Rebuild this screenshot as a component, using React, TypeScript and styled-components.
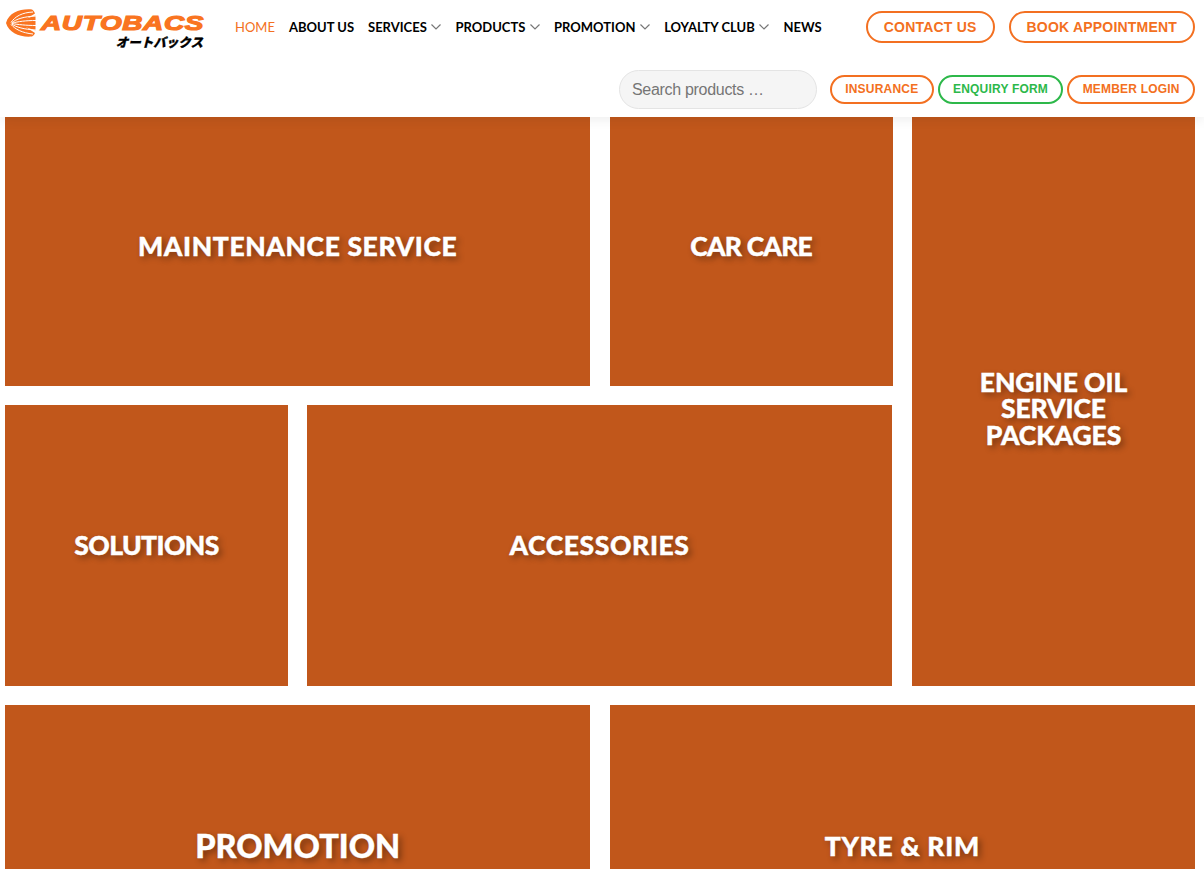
import React from "react"
import styled, { createGlobalStyle } from "styled-components"

const orange = "#f37021"
const green = "#2db84a"

const GlobalStyle = createGlobalStyle`
  html, body {
    margin: 0;
    padding: 0;
    background: #fff;
    overflow: hidden;
  }
  * {
    box-sizing: border-box;
  }
`

const Page = styled.div`
  height: 869px;
  overflow: hidden;
  font-family: "Lato", sans-serif;
`

const Header = styled.header`
  position: relative;
  z-index: 2;
  height: 117px;
  padding: 0 9px 0 5px;
  background: #fff;
  box-shadow: 0 2px 12px rgba(0, 0, 0, 0.08);
`

const TopRow = styled.div`
  display: flex;
  align-items: flex-start;
  height: 70px;
`

const Logo = styled.a`
  display: block;
  flex: none;
  width: 200px;
  height: 46px;
  margin-top: 8px;
`

const LogoTop = styled.div`
  display: flex;
  align-items: center;
  height: 30px;
`

const LogoWord = styled.span`
  margin-left: 5px;
  font-family: "Liberation Sans", sans-serif;
  font-size: 21px;
  font-weight: 700;
  font-style: italic;
  letter-spacing: 0.5px;
  line-height: 30px;
  color: #f97420;
  -webkit-text-stroke: 1.2px #f97420;
  transform-origin: left center;
  transform: scaleX(1.33);
`

const LogoKana = styled.div`
  margin-top: -3px;
  padding-right: 2px;
  text-align: right;
  font-family: "Noto Sans CJK JP", sans-serif;
  font-size: 12.5px;
  font-weight: 900;
  font-style: italic;
  line-height: 14px;
  color: #000;
  -webkit-text-stroke: 0.3px #000;
`

const Nav = styled.nav`
  display: flex;
  align-items: center;
  gap: 14px;
  height: 20px;
  margin: 17px 0 0 30px;
`

const NavItem = styled.a<{ $active?: boolean }>`
  display: flex;
  align-items: center;
  gap: 4.7px;
  font-size: 13px;
  font-weight: ${(p) => (p.$active ? 400 : 700)};
  line-height: 20px;
  white-space: nowrap;
  color: ${(p) => (p.$active ? orange : "#000")};
`

const Actions = styled.div`
  display: flex;
  gap: 14px;
  margin: 11px 0 0 auto;
`

const PillButton = styled.a<{ $small?: boolean; $green?: boolean }>`
  display: flex;
  align-items: center;
  justify-content: center;
  height: ${(p) => (p.$small ? 29 : 32)}px;
  padding: 0 ${(p) => (p.$small ? 13.3 : 16)}px 1px;
  border: 2px solid ${(p) => (p.$green ? green : orange)};
  border-radius: 20px;
  font-family: "Liberation Sans", sans-serif;
  font-size: ${(p) => (p.$small ? 12 : 14)}px;
  font-weight: 700;
  letter-spacing: 0.2px;
  white-space: nowrap;
  color: ${(p) => (p.$green ? green : orange)};
`

const BottomRow = styled.div`
  display: flex;
  align-items: center;
  justify-content: flex-end;
`

const Search = styled.input`
  width: 198px;
  height: 39px;
  margin-right: 13px;
  padding: 0 12px;
  border: 1px solid #e4e4e4;
  border-radius: 20px;
  background: #f5f5f5;
  font-family: "Liberation Sans", sans-serif;
  font-size: 16px;
  letter-spacing: -0.3px;
  outline: none;

  &::placeholder {
    color: #757575;
    opacity: 1;
  }
`

const SmallButtons = styled.div`
  display: flex;
  gap: 4px;
`

const Tiles = styled.main`
  display: grid;
  grid-template-columns: repeat(4, 283px);
  grid-template-rows: 269px 281px 282px;
  column-gap: 19.33px;
  row-gap: 19px;
  padding-left: 5px;
`

const Tile = styled.a<{ $col: number; $row?: number; $size?: number; $track?: number; $shift?: number }>`
  display: flex;
  align-items: center;
  justify-content: center;
  grid-column: span ${(p) => p.$col};
  grid-row: span ${(p) => p.$row ?? 1};
  padding-top: ${(p) => Math.max(p.$shift ?? 0, 0) * 2}px;
  padding-bottom: ${(p) => Math.max(-(p.$shift ?? 0), 0) * 2}px;
  background: #c1571b;
  text-align: center;
  font-family: "Lato", sans-serif;
  font-size: ${(p) => p.$size ?? 26.5}px;
  font-weight: 900;
  letter-spacing: ${(p) => p.$track ?? 0}px;
  line-height: 26.5px;
  color: #fff;
  -webkit-text-stroke: 0.4px #fff;
  text-shadow: 3px 3px 6px rgba(0, 0, 0, 0.4);
`

const AccessoriesTile = styled(Tile)`
  margin-right: 1px;
`

const Chevron = () => (
  <svg width="10" height="6" viewBox="0 0 10 6" fill="none" stroke="#777" strokeWidth="1.2">
    <path d="M0.5 0.5 5 5 9.5 0.5" />
  </svg>
)

const WheelLogo = () => (
  <svg width="31" height="28" viewBox="0 0 31 28" fill="none">
    <path
      d="M27 0.500C16 -0.500 4 3 1 14c3 10 14 14.500 26 13.500 1.500-.8 2.500-2 3-3.500L15 14 30 4.500c-.6-1.800-1.600-3-3-4Z"
      fill="#f97420"
    />
    <path d="M8 14 30.500 6.500V21.500Z" fill="#f97420" />
    <g stroke="#fff" strokeWidth="1">
      <path d="M6 13.500C10 7.500 17 3.500 28 3" />
      <path d="M6.500 14C11 10 19 7.500 31 7" />
      <path d="M7 14.200C13 12.500 21 11.500 31 11.500" />
      <path d="M7 14.600C13 15.500 21 16.500 31 16.500" />
      <path d="M6.500 15C11 18 19 20.500 31 21" />
      <path d="M6 15.500C10 20 17 24 28 25" />
    </g>
  </svg>
)

const navItems = [
  { label: "HOME", active: true },
  { label: "ABOUT US" },
  { label: "SERVICES", menu: true },
  { label: "PRODUCTS", menu: true },
  { label: "PROMOTION", menu: true },
  { label: "LOYALTY CLUB", menu: true },
  { label: "NEWS" },
]

export default function App() {
  return (
    <Page>
      <GlobalStyle />
      <Header>
        <TopRow>
          <Logo>
            <LogoTop>
              <WheelLogo />
              <LogoWord>AUTOBACS</LogoWord>
            </LogoTop>
            <LogoKana>オートバックス</LogoKana>
          </Logo>
          <Nav>
            {navItems.map((item) => (
              <NavItem key={item.label} $active={item.active}>
                {item.label}
                {item.menu && <Chevron />}
              </NavItem>
            ))}
          </Nav>
          <Actions>
            <PillButton>CONTACT US</PillButton>
            <PillButton>BOOK APPOINTMENT</PillButton>
          </Actions>
        </TopRow>
        <BottomRow>
          <Search placeholder="Search products …" />
          <SmallButtons>
            <PillButton $small>INSURANCE</PillButton>
            <PillButton $small $green>ENQUIRY FORM</PillButton>
            <PillButton $small>MEMBER LOGIN</PillButton>
          </SmallButtons>
        </BottomRow>
      </Header>
      <Tiles>
        <Tile $col={2} $track={0.6} $shift={-5}>MAINTENANCE SERVICE</Tile>
        <Tile $col={1} $track={-0.8} $shift={-5}>CAR CARE</Tile>
        <Tile $col={1} $row={2} $track={-0.1} $shift={7}>
          ENGINE OIL
          <br />
          SERVICE
          <br />
          PACKAGES
        </Tile>
        <Tile $col={1} $track={-0.6}>SOLUTIONS</Tile>
        <AccessoriesTile $col={2} $track={0.6}>ACCESSORIES</AccessoriesTile>
        <Tile $col={2} $size={32.5}>PROMOTION</Tile>
        <Tile $col={2} $track={0.7}>TYRE &amp; RIM</Tile>
      </Tiles>
    </Page>
  )
}
